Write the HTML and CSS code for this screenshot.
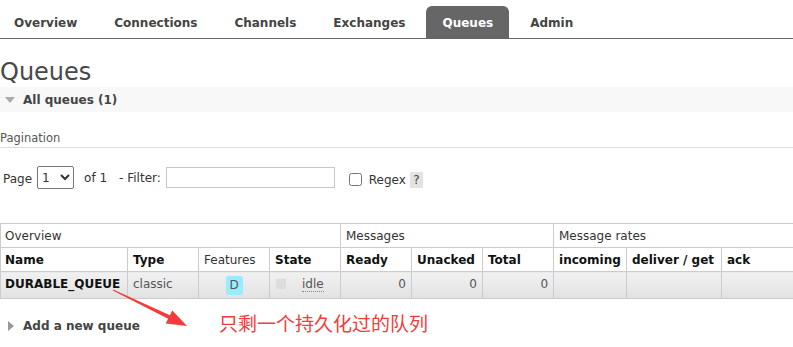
FILE: index.html
```html
<!DOCTYPE html>
<html lang="en">
<head>
<meta charset="utf-8">
<title>Queues</title>
<link rel="stylesheet" href="styles.css">
</head>
<body>
<nav class="nav">
  <a class="tab first">Overview</a>
  <a class="tab">Connections</a>
  <a class="tab">Channels</a>
  <a class="tab">Exchanges</a>
  <a class="tab active">Queues</a>
  <a class="tab">Admin</a>
</nav>

<h1 class="title">Queues</h1>

<div class="section-head"><span class="tri-down"></span><span>All queues (1)</span></div>

<h3 class="pag-title">Pagination</h3>

<div class="pag-row">
  <span class="lbl-page">Page</span>
  <select class="page-select"><option>1</option></select>
  <span class="lbl-of">of 1</span>
  <span class="lbl-filter">- Filter:</span>
  <input class="filter-input" type="text">
  <input class="regex-check" type="checkbox">
  <span class="lbl-regex">Regex</span>
  <span class="help">?</span>
</div>

<table class="queues">
  <colgroup>
    <col class="c-name"><col class="c-std"><col class="c-std"><col class="c-std">
    <col class="c-std"><col class="c-std"><col class="c-std">
    <col class="c-in"><col class="c-del"><col class="c-ack">
  </colgroup>
  <thead>
    <tr class="grp">
      <th colspan="4">Overview</th>
      <th colspan="3">Messages</th>
      <th colspan="3">Message rates</th>
    </tr>
    <tr class="cols">
      <th class="first-col">Name</th>
      <th>Type</th>
      <th class="normal">Features</th>
      <th>State</th>
      <th>Ready</th>
      <th>Unacked</th>
      <th>Total</th>
      <th>incoming</th>
      <th>deliver / get</th>
      <th>ack</th>
    </tr>
  </thead>
  <tbody>
    <tr class="data">
      <td class="first-col qname">DURABLE_QUEUE</td>
      <td class="muted">classic</td>
      <td class="center"><span class="badge">D</span></td>
      <td class="state"><span class="state-sq"></span><span class="idle">idle</span></td>
      <td class="num">0</td>
      <td class="num">0</td>
      <td class="num">0</td>
      <td></td>
      <td></td>
      <td></td>
    </tr>
  </tbody>
</table>

<div class="section-add"><span class="tri-right"></span><span>Add a new queue</span></div>

<div class="note">只剩一个持久化过的队列</div>
<svg class="arrow" width="793" height="347" viewBox="0 0 793 347">
  <polygon points="113.2,289.4 169.9,315.2 172.3,310.5 187,326 165.7,323.4 168.1,318.7 112.8,290.6" fill="#f53b3b"/>
</svg>
</body>
</html>
```

FILE: styles.css
```css
html, body {
  margin: 0;
  padding: 0;
}
body {
  position: relative;
  width: 793px;
  font-family: "DejaVu Sans", Verdana, sans-serif;
  font-size: 12px;
  color: #484848;
  background: #fff;
  overflow: hidden;
}

/* navigation */
.nav {
  display: flex;
  gap: 5px;
  padding-top: 6px;
  border-bottom: 1px solid #666;
}
.tab {
  display: block;
  height: 32px;
  line-height: 34px;
  padding: 0 16px;
  font-weight: bold;
  font-size: 12px;
  color: #444;
  border-radius: 6px 6px 0 0;
}
.tab.first {
  margin-left: -2px;
}
.tab.active {
  background: #666;
  color: #fff;
}

/* title */
.title {
  margin: 19px 0 0 0;
  font-size: 24px;
  line-height: 28px;
  font-weight: normal;
  color: #484848;
}

.section-head {
  display: flex;
  align-items: center;
  margin-top: 1px;
  height: 25px;
  padding-left: 5px;
  background: #f8f8f8;
  font-weight: bold;
  color: #444;
}
.tri-down {
  width: 0;
  height: 0;
  border-left: 5px solid transparent;
  border-right: 5px solid transparent;
  border-top: 6px solid #aaa;
  margin-right: 8px;
}

.pag-title {
  margin: 19px 0 0 0;
  font-size: 11.5px;
  line-height: 14px;
  font-weight: normal;
  color: #555;
  padding-bottom: 2px;
  border-bottom: 1px solid #ddd;
}

.pag-row {
  display: flex;
  align-items: center;
  margin-top: 18px;
  height: 23px;
  padding-left: 3px;
  color: #333;
}
.lbl-page {
  margin-top: 2px;
}
.page-select {
  margin: 0 0 0 5px;
  width: 37px;
  height: 23px;
  font-family: "DejaVu Sans", Verdana, sans-serif;
  font-size: 12px;
  border: 1px solid #767676;
  border-radius: 2px;
  background: #fff;
  color: #333;
}
.lbl-of {
  margin-left: 10px;
}
.lbl-filter {
  margin-left: 12px;
}
.filter-input {
  margin: 0 0 0 5px;
  width: 169px;
  height: 21px;
  box-sizing: border-box;
  border: 1px solid #c8c8c8;
  padding: 0;
}
.regex-check {
  margin: 3px 0 0 14px;
  width: 13px;
  height: 13px;
}
.lbl-regex {
  margin-left: 7px;
  margin-top: 4px;
}
.help {
  margin-left: 4px;
  margin-top: 4px;
  width: 13px;
  height: 16px;
  line-height: 16px;
  text-align: center;
  background: #e3e3e3;
  color: #444;
}

/* table */
.queues {
  margin-top: 34px;
  width: 793px;
  border-collapse: collapse;
  table-layout: fixed;
  font-size: 12px;
}
.c-name { width: 127px; }
.c-std { width: 71px; }
.c-in { width: 73px; }
.c-del { width: 95px; }
.c-ack { width: 72px; }

.queues th,
.queues td {
  border: 1px solid #ccc;
  padding: 0 5px;
  text-align: left;
  white-space: nowrap;
  overflow: hidden;
}
.queues .first-col {
  padding-left: 4px;
}
.grp th {
  height: 23px;
  font-weight: normal;
  color: #333;
  padding-left: 4px;
}
.grp th + th {
  padding-left: 5px;
}
.cols th {
  height: 23px;
  font-weight: bold;
  color: #111;
}
.cols th.normal {
  font-weight: normal;
  color: #333;
}
.queues .data td {
  height: 23px;
  padding-bottom: 3px;
  background: linear-gradient(to bottom, #f1f1f1, #e2e2e2);
  vertical-align: middle;
}
.qname {
  font-weight: bold;
  color: #111;
}
.muted {
  color: #555;
}
.center {
  text-align: center !important;
}
.badge {
  display: inline-block;
  width: 17px;
  height: 19px;
  line-height: 19px;
  text-align: center;
  background: #99ebff;
  border-radius: 3px;
  color: #555;
  vertical-align: middle;
  margin-top: 3px;
}
.queues td.state {
  padding-left: 6px;
}
.state-sq {
  display: inline-block;
  width: 10px;
  height: 10px;
  background: #ddd;
  vertical-align: middle;
  margin-right: 16px;
}
.idle {
  color: #555;
  border-bottom: 1px dotted #888;
  vertical-align: middle;
}
.num {
  text-align: right !important;
  color: #555;
}

.section-add {
  display: flex;
  align-items: center;
  margin-top: 14px;
  height: 25px;
  padding-left: 8px;
  font-weight: bold;
  color: #444;
}
.tri-right {
  width: 0;
  height: 0;
  border-top: 5px solid transparent;
  border-bottom: 5px solid transparent;
  border-left: 6px solid #999;
  margin-right: 9px;
}

/* annotation overlay */
.note {
  position: absolute;
  left: 219px;
  top: 312px;
  font-family: "Noto Sans CJK SC", sans-serif;
  font-size: 19px;
  line-height: 22px;
  color: #f53b3b;
}
.arrow {
  position: absolute;
  left: 0;
  top: 0;
  pointer-events: none;
}
```
